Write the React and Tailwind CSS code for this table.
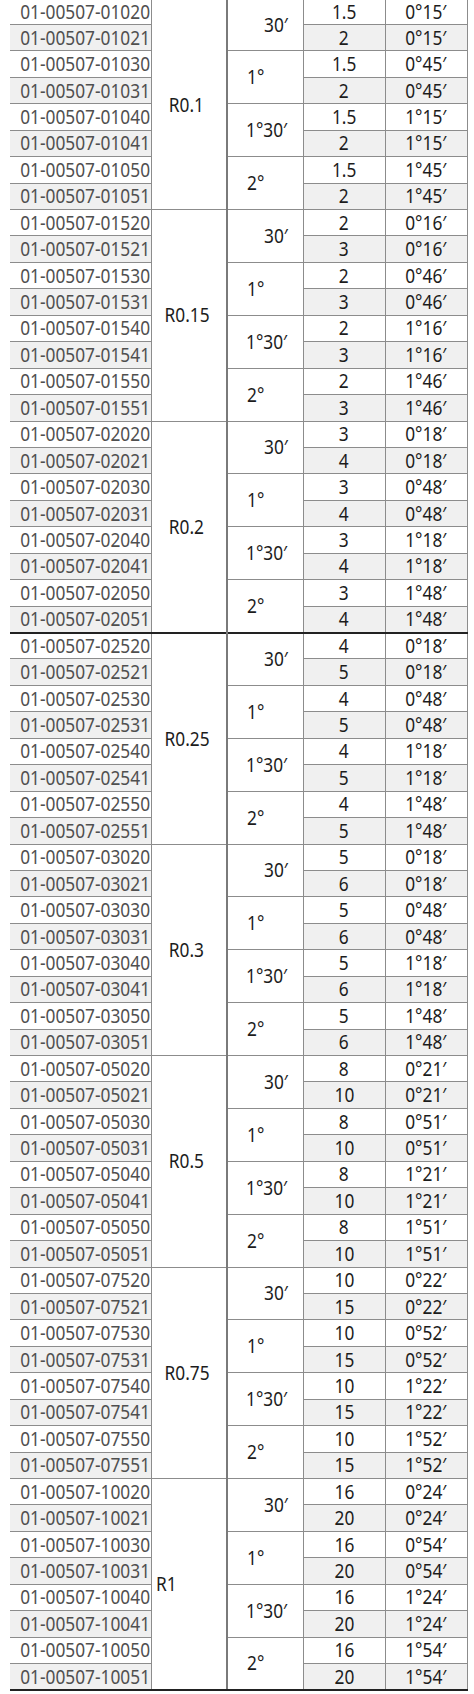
const groups = [
  { r: "R0.1", code: "010", d: ["1.5", "2"], m: ["15", "45"] },
  { r: "R0.15", code: "015", d: ["2", "3"], m: ["16", "46"] },
  { r: "R0.2", code: "020", d: ["3", "4"], m: ["18", "48"] },
  { r: "R0.25", code: "025", d: ["4", "5"], m: ["18", "48"] },
  { r: "R0.3", code: "030", d: ["5", "6"], m: ["18", "48"] },
  { r: "R0.5", code: "050", d: ["8", "10"], m: ["21", "51"] },
  { r: "R0.75", code: "075", d: ["10", "15"], m: ["22", "52"] },
  { r: "R1", code: "100", d: ["16", "20"], m: ["24", "54"] },
];

const angles = [
  { a: "30′", n: "2", deg: "0", mi: 0, pad: "pl-[36px]" },
  { a: "1°", n: "3", deg: "0", mi: 1, pad: "pl-[19px]" },
  { a: "1°30′", n: "4", deg: "1", mi: 0, pad: "pl-[18px]" },
  { a: "2°", n: "5", deg: "1", mi: 1, pad: "pl-[19px]" },
];

// narrow the glyphs a little, the source face is condensed
function T({ children, left }) {
  return (
    <span className={`inline-block whitespace-nowrap scale-x-[0.865] ${left ? "origin-left" : ""}`}>
      {children}
    </span>
  );
}

export default function App() {
  return (
    <div className="bg-white w-[474px] h-[1694px] overflow-hidden pl-[10px] font-['Noto_Sans','Open_Sans',sans-serif]">
      <table className="border-collapse table-fixed w-[457px] text-[20px] leading-none text-[#1c1c1c] whitespace-nowrap">
        <colgroup>
          <col className="w-[141px]" />
          <col className="w-[76px]" />
          <col className="w-[76px]" />
          <col className="w-[82px]" />
          <col className="w-[82px]" />
        </colgroup>
        <tbody>
          {groups.map((g, gi) => {
            const lastGroup = gi === groups.length - 1;
            const sep =
              gi === 3
                ? "border-t-2 border-t-[#222]"
                : gi > 0
                ? "border-t border-t-[#7a7a7a]"
                : "";
            return angles.flatMap((an, ai) =>
              [0, 1].map((k) => {
                const first = ai === 0 && k === 0;
                const last = lastGroup && ai === 3 && k === 1;
                const bottom = last ? "border-b-2 border-b-[#222]" : "border-b border-b-[#8c8c8c]";
                const gray = k === 1 ? "bg-[#f0f0f0]" : "bg-white";
                const h = gi === 0 && first ? "h-[24.45px]" : "h-[26.45px]";
                return (
                  <tr key={`${gi}-${ai}-${k}`} className={`${h} ${first ? sep : ""}`}>
                    <td className={`${gray} ${bottom} border-r border-r-[#8c8c8c] text-center text-[#4f4f4f] p-0`}>
                      <T>01-00507-{g.code}{an.n}{k}</T>
                    </td>
                    {first && (
                      <td
                        rowSpan={8}
                        className={`border-r-2 border-r-[#7a7a7a] ${lastGroup ? "border-b-2 border-b-[#222] pl-[4px] text-left" : "border-b border-b-[#8c8c8c] text-center pr-[4px]"} align-middle p-0`}
                      >
                        <T left={lastGroup}>{g.r}</T>
                      </td>
                    )}
                    {k === 0 && (
                      <td
                        rowSpan={2}
                        className={`${an.pad} ${lastGroup && ai === 3 ? "border-b-2 border-b-[#222]" : "border-b border-b-[#8c8c8c]"} border-r border-r-[#8c8c8c] text-left align-middle p-0`}
                      >
                        <T left>{an.a}</T>
                      </td>
                    )}
                    <td className={`${gray} ${bottom} border-r border-r-[#8c8c8c] text-center p-0`}>
                      <T>{g.d[k]}</T>
                    </td>
                    <td className={`${gray} ${bottom} border-r border-r-[#8c8c8c] text-center p-0`}>
                      <T>
                        {an.deg}°{g.m[an.mi]}′
                      </T>
                    </td>
                  </tr>
                );
              })
            );
          })}
        </tbody>
      </table>
    </div>
  );
}
